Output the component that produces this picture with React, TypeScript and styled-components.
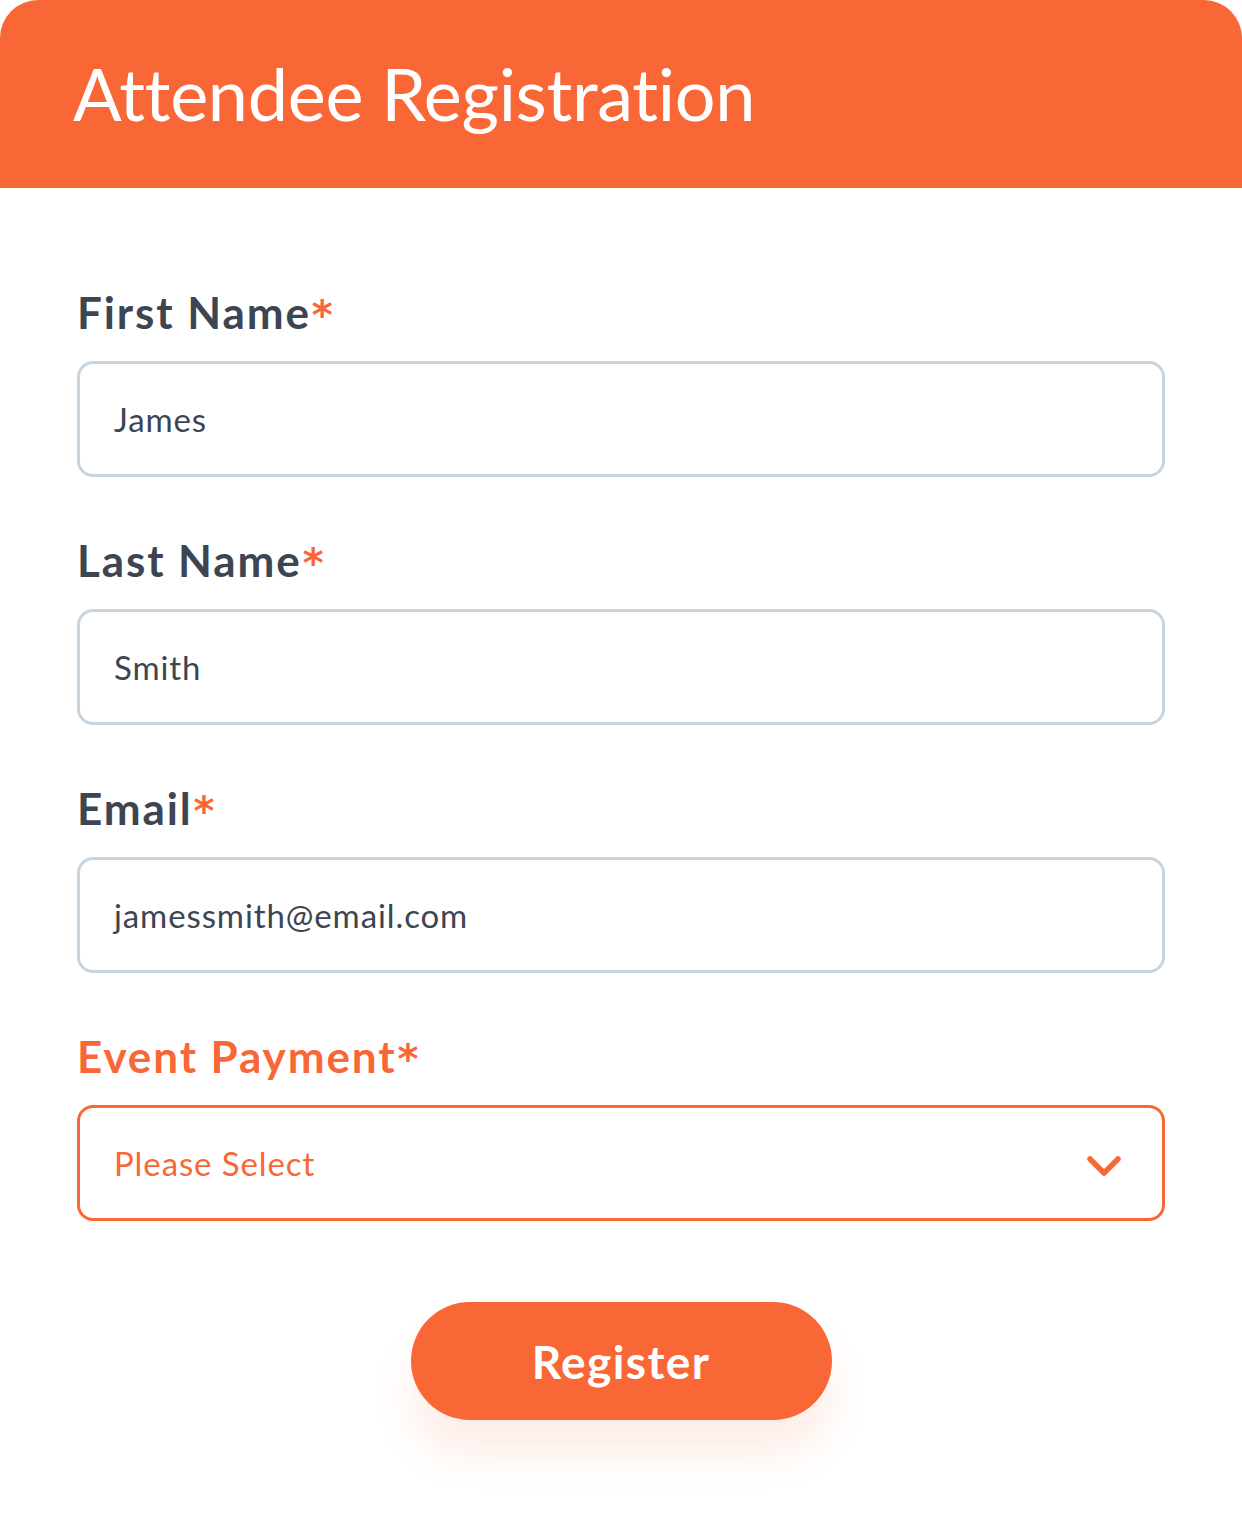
import React from "react";
import styled, { createGlobalStyle } from "styled-components";

const Global = createGlobalStyle`
  html, body { margin: 0; padding: 0; background: #ffffff; }
  body { font-family: "Lato", "Noto Sans", sans-serif; }
  * { box-sizing: border-box; }
`;

const ORANGE = "#fa6736";
const INK = "#3d4550";

const Page = styled.div`
  width: 1242px;
  min-height: 1536px;
  background: #ffffff;
  display: flex;
  flex-direction: column;
`;

const Header = styled.header`
  height: 188px;
  background: ${ORANGE};
  border-radius: 38px 38px 0 0;
  display: flex;
  align-items: center;
  padding: 0 0 2px 73px;
`;

const Title = styled.h1`
  margin: 0;
  font-family: "Lato", "Noto Sans", sans-serif;
  font-weight: 400;
  font-size: 72px;
  line-height: 1;
  color: #ffffff;
  letter-spacing: -0.3px;
`;

const Form = styled.form`
  display: flex;
  flex-direction: column;
  padding: 98px 77px 0 77px;
`;

const Field = styled.div`
  display: flex;
  flex-direction: column;
  gap: 23px;
  margin-bottom: 57px;
`;

const Label = styled.label<{ $accent?: boolean }>`
  display: block;
  height: 52px;
  font-family: "Lato", "Noto Sans", sans-serif;
  font-weight: 700;
  font-size: 44px;
  line-height: 52px;
  color: ${(p) => (p.$accent ? ORANGE : INK)};
  letter-spacing: 1.9px;
`;

const Star = styled.span`
  color: ${ORANGE};
  font-family: "DejaVu Sans", sans-serif;
  font-weight: 700;
  font-size: 40px;
  line-height: 0;
  letter-spacing: 0;
  margin-left: 1px;
`;

const Box = styled.div<{ $accent?: boolean }>`
  height: 116px;
  border: 3px solid ${(p) => (p.$accent ? ORANGE : "#c6d4e0")};
  border-radius: 16px;
  display: flex;
  align-items: center;
  justify-content: space-between;
  padding: 0 37px 0 34px;
  background: #ffffff;
`;

const Value = styled.span<{ $accent?: boolean }>`
  font-family: "Lato", "Noto Sans", sans-serif;
  font-weight: 400;
  font-size: 33px;
  color: ${(p) => (p.$accent ? ORANGE : INK)};
  letter-spacing: 0.9px;
`;

const Chevron = styled.svg`
  width: 40px;
  height: 24px;
  margin-top: 6px;
`;

const ButtonRow = styled.div`
  display: flex;
  justify-content: center;
  padding-top: 24px;
`;

const Button = styled.button`
  width: 421px;
  height: 118px;
  border: none;
  border-radius: 59px;
  background: ${ORANGE};
  color: #ffffff;
  font-family: "Lato", "Noto Sans", sans-serif;
  font-weight: 700;
  font-size: 46px;
  letter-spacing: 1.4px;
  box-shadow: 0 34px 40px rgba(250, 103, 54, 0.12);
  cursor: pointer;
`;

const fields = [
  { label: "First Name", value: "James" },
  { label: "Last Name", value: "Smith" },
  { label: "Email", value: "jamessmith@email.com" },
];

export default function App() {
  return (
    <Page>
      <Global />
      <Header>
        <Title>Attendee Registration</Title>
      </Header>
      <Form onSubmit={(e) => e.preventDefault()}>
        {fields.map((f) => (
          <Field key={f.label}>
            <Label>
              {f.label}
              <Star>*</Star>
            </Label>
            <Box>
              <Value>{f.value}</Value>
            </Box>
          </Field>
        ))}
        <Field>
          <Label $accent>
            Event Payment<Star>*</Star>
          </Label>
          <Box $accent>
            <Value $accent>Please Select</Value>
            <Chevron viewBox="0 0 40 24">
              <polyline
                points="5,5 19,19 33,5"
                fill="none"
                stroke={ORANGE}
                strokeWidth="5.5"
                strokeLinecap="round"
                strokeLinejoin="round"
              />
            </Chevron>
          </Box>
        </Field>
        <ButtonRow>
          <Button type="submit">Register</Button>
        </ButtonRow>
      </Form>
    </Page>
  );
}
